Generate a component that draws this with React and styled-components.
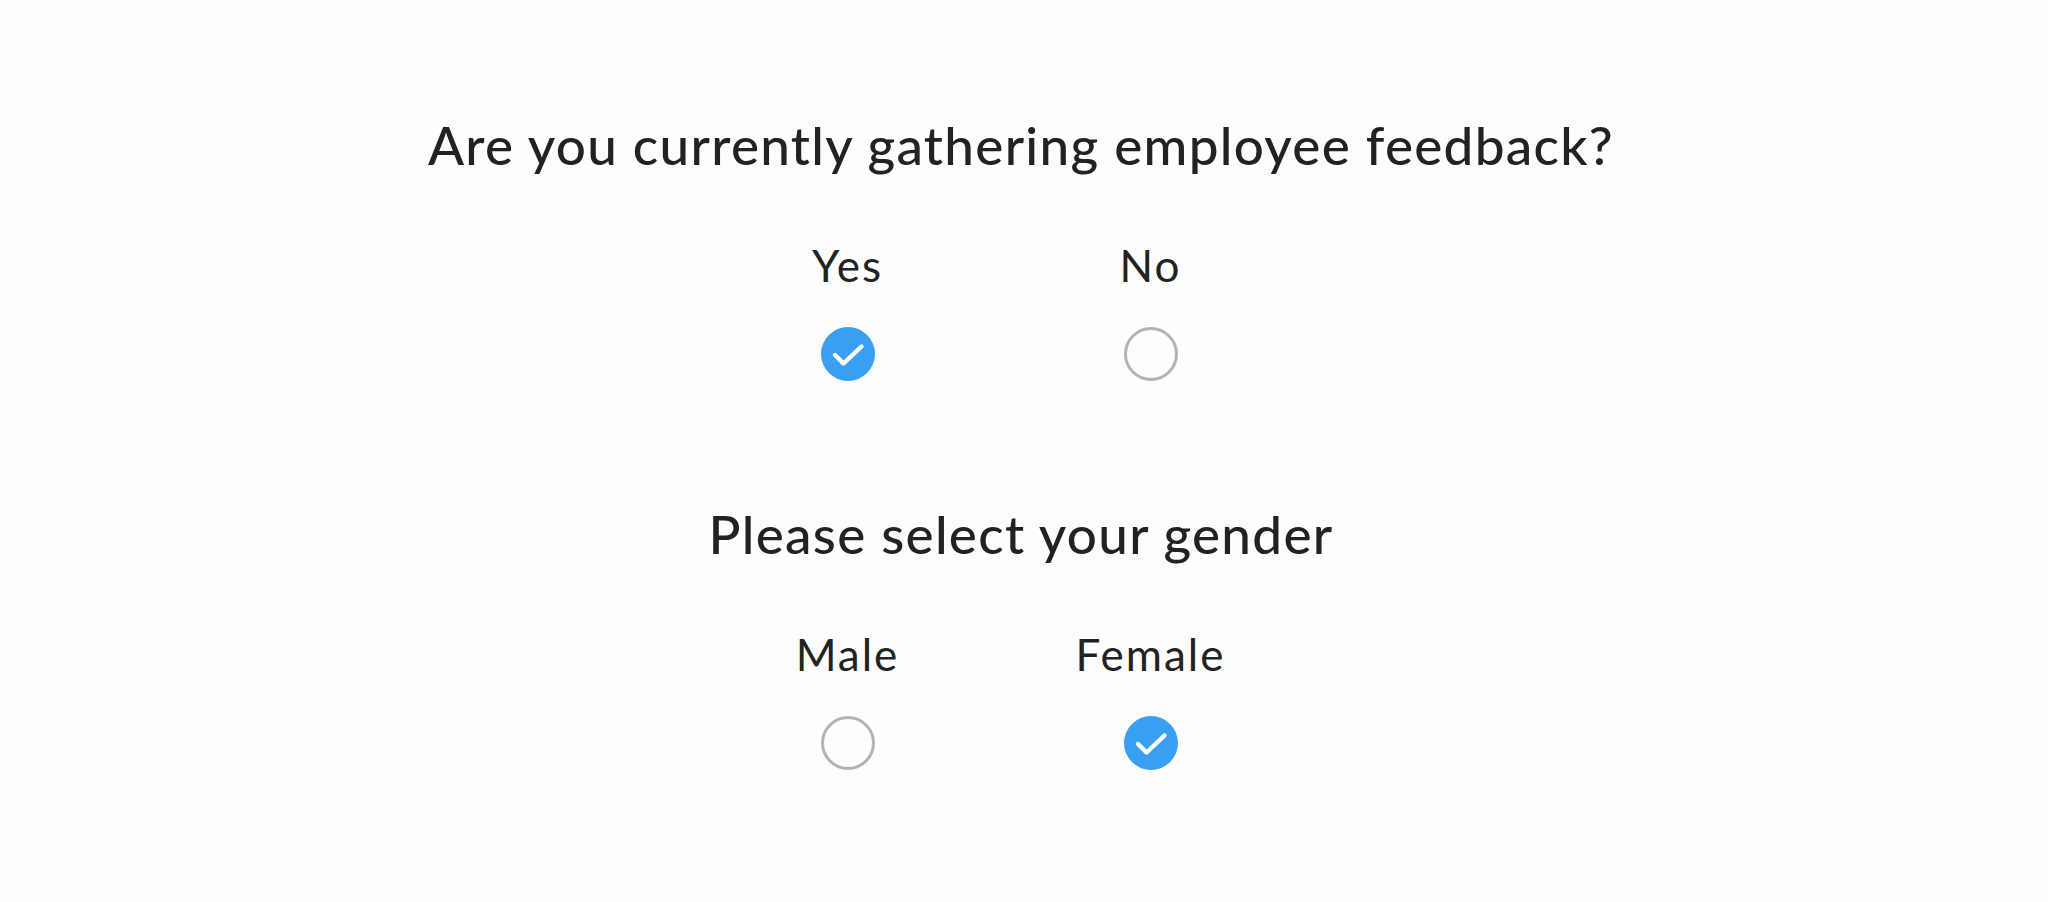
import React from 'react'
import styled, { createGlobalStyle } from 'styled-components'

const GlobalStyle = createGlobalStyle`
  html, body {
    margin: 0;
    padding: 0;
    background: #fdfdfd;
  }
  body {
    font-family: 'Lato', 'Noto Sans', sans-serif;
    color: #222222;
  }
`

const questions = [
  { title: 'Are you currently gathering employee feedback?', options: ['Yes', 'No'], selected: 0 },
  { title: 'Please select your gender', options: ['Male', 'Female'], selected: 1 },
]

const Page = styled.div`
  width: 2048px;
  height: 902px;
  padding-top: 111px;
  box-sizing: border-box;
  display: flex;
  flex-direction: column;
  gap: 119px;
`

const Question = styled.section`
  display: flex;
  flex-direction: column;
  align-items: center;
`

const Title = styled.h2`
  margin: 0;
  font-size: 53px;
  font-weight: 500;
  line-height: 68px;
  letter-spacing: 1.3px;
  padding-right: 6px;
`

const Options = styled.div`
  display: flex;
  margin-top: 60px;
  padding-right: 50px;
`

const Option = styled.label`
  width: 303px;
  display: flex;
  flex-direction: column;
  align-items: center;
  gap: 36px;
`

const Label = styled.span`
  font-size: 44px;
  line-height: 52px;
  letter-spacing: 2px;
`

const Radio = styled.span`
  width: 54px;
  height: 54px;
  box-sizing: border-box;
  border-radius: 50%;
  display: flex;
  align-items: center;
  justify-content: center;
  background: ${p => (p.$checked ? '#389ff1' : 'transparent')};
  border: ${p => (p.$checked ? 'none' : '3px solid #b3b3b3')};
`

const Check = () => (
  <svg width="54" height="54" viewBox="0 0 54 54" fill="none" stroke="#fff" strokeWidth="4.4" strokeLinecap="round" strokeLinejoin="round">
    <path d="M14 28l8.5 8.5L40.5 19.5" />
  </svg>
)

export default function App() {
  return (
    <>
      <GlobalStyle />
      <Page>
        {questions.map(q => (
          <Question key={q.title}>
            <Title>{q.title}</Title>
            <Options>
              {q.options.map((o, i) => (
                <Option key={o}>
                  <Label>{o}</Label>
                  <Radio $checked={i === q.selected}>{i === q.selected && <Check />}</Radio>
                </Option>
              ))}
            </Options>
          </Question>
        ))}
      </Page>
    </>
  )
}
